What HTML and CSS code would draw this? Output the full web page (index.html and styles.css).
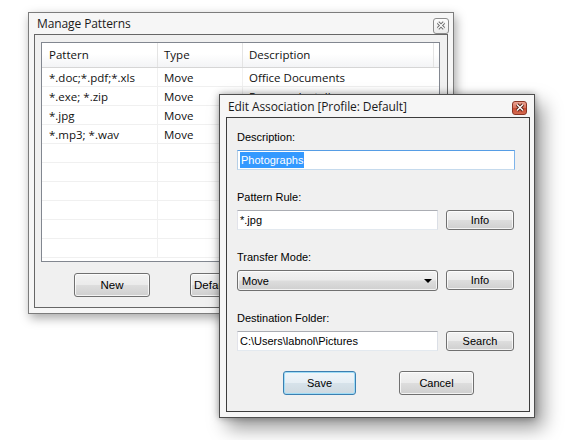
FILE: index.html
```html
<!DOCTYPE html>
<html>
<head>
<meta charset="utf-8">
<link rel="stylesheet" href="styles.css">
</head>
<body>
<div class="desk">
  <div class="win win-manage">
    <div class="titlebar">
      <span class="title">Manage Patterns</span>
      <span class="close close-inactive">
        <svg width="10" height="9" viewBox="0 0 10 9"><path d="M2 1.5 L8 7.5 M8 1.5 L2 7.5" stroke="#707070" stroke-width="3.2" fill="none"/><path d="M2 1.5 L8 7.5 M8 1.5 L2 7.5" stroke="#fff" stroke-width="1.2" fill="none"/></svg>
      </span>
    </div>
    <div class="client client-manage">
      <div class="list">
        <div class="lrow lhead">
          <div class="c c1">Pattern</div>
          <div class="c c2">Type</div>
          <div class="c c3">Description</div>
          <div class="c c4"></div>
        </div>
        <div class="lrow"><div class="c c1">*.doc;*.pdf;*.xls</div><div class="c c2">Move</div><div class="c c3">Office Documents</div></div>
        <div class="lrow"><div class="c c1">*.exe; *.zip</div><div class="c c2">Move</div><div class="c c3">Program Installers</div></div>
        <div class="lrow"><div class="c c1">*.jpg</div><div class="c c2">Move</div><div class="c c3"></div></div>
        <div class="lrow"><div class="c c1">*.mp3; *.wav</div><div class="c c2">Move</div><div class="c c3"></div></div>
        <div class="lrow"><div class="c c1"></div><div class="c c2"></div><div class="c c3"></div></div>
        <div class="lrow"><div class="c c1"></div><div class="c c2"></div><div class="c c3"></div></div>
        <div class="lrow"><div class="c c1"></div><div class="c c2"></div><div class="c c3"></div></div>
        <div class="lrow"><div class="c c1"></div><div class="c c2"></div><div class="c c3"></div></div>
        <div class="lrow"><div class="c c1"></div><div class="c c2"></div><div class="c c3"></div></div>
        <div class="lrow"><div class="c c1"></div><div class="c c2"></div><div class="c c3"></div></div>
      </div>
      <div class="btnrow-manage">
        <div class="btn btn-m">New</div>
        <div class="btn btn-m btn-left">Default</div>
      </div>
    </div>
  </div>

  <div class="win win-edit">
    <div class="titlebar titlebar-edit">
      <span class="title">Edit Association [Profile: Default]</span>
      <span class="close close-active">
        <svg width="10" height="9" viewBox="0 0 10 9"><path d="M2 1.5 L8 7.5 M8 1.5 L2 7.5" stroke="#5a2418" stroke-width="3.4" fill="none"/><path d="M2 1.5 L8 7.5 M8 1.5 L2 7.5" stroke="#fff" stroke-width="1.4" fill="none"/></svg>
      </span>
    </div>
    <div class="client client-edit">
      <div class="group">
        <div class="label">Description:</div>
        <div class="field field-focus"><span class="sel">Photographs</span></div>
      </div>
      <div class="group">
        <div class="label">Pattern Rule:</div>
        <div class="pair">
          <div class="field">*.jpg</div>
          <div class="btn btn-s">Info</div>
        </div>
      </div>
      <div class="group">
        <div class="label">Transfer Mode:</div>
        <div class="pair">
          <div class="combo"><span>Move</span><span class="arrow"></span></div>
          <div class="btn btn-s">Info</div>
        </div>
      </div>
      <div class="group">
        <div class="label">Destination Folder:</div>
        <div class="pair">
          <div class="field">C:\Users\labnol\Pictures</div>
          <div class="btn btn-s">Search</div>
        </div>
      </div>
      <div class="btnrow-edit">
        <div class="btn btn-l btn-default">Save</div>
        <div class="btn btn-l btn-cancel">Cancel</div>
      </div>
    </div>
  </div>
</div>
</body>
</html>
```

FILE: styles.css
```css
* { box-sizing: border-box; }
html, body { margin: 0; padding: 0; background: #fff; }
.desk { position: relative; width: 575px; height: 440px; overflow: hidden; }

.win {
  position: absolute;
  display: flex;
  flex-direction: column;
  background: #f6f6f6;
}
.win-manage {
  left: 28px; top: 12px; width: 426px; height: 302px;
  border: 1px solid #7c7c7c;
  padding: 0 5px 5px 5px;
  box-shadow: 2px 4px 10px rgba(0,0,0,0.35);
}
.win-edit {
  left: 219px; top: 94px; width: 316px; height: 324px;
  border: 1px solid #4e4e4e;
  padding: 0 4px 5px 6px;
  box-shadow: 0 0 7px rgba(0,0,0,0.35), 8px 10px 18px rgba(0,0,0,0.4);
}

.titlebar {
  height: 21px;
  display: flex;
  align-items: center;
  justify-content: space-between;
  padding-left: 3px;
}
.titlebar-edit { height: 22px; padding-left: 2px; }
.title {
  font-family: "Open Sans", "Noto Sans", sans-serif;
  font-size: 12px;
  color: #1a1a1a;
  letter-spacing: -0.1px;
}
.close {
  display: flex;
  align-items: center;
  justify-content: center;
  border-radius: 3px;
}
.close-inactive {
  width: 16px; height: 16px;
  margin-right: -1px; margin-top: 4px;
  border: 1px solid #8c8c8c;
  background: linear-gradient(#fdfdfd, #ececec);
}
.close-active {
  width: 15px; height: 14px;
  margin-right: 3px; margin-top: 3px;
  border: 1px solid #8a3524;
  background: linear-gradient(#eba494, #d8705a 50%, #c84b33 51%, #d56a50);
}

.client {
  flex: 1;
  background: #f0f0f0;
  display: flex;
  flex-direction: column;
}
.client-manage {
  border: 1px solid #666;
  padding: 7px 7px 0 6px;
}
.client-edit {
  border: 1px solid #3c3c3c;
  padding: 12px 14px 0 10px;
  font-family: "Liberation Sans", Arial, sans-serif;
  font-size: 11px;
  color: #000;
}

/* list view */
.list {
  height: 220px;
  border: 1px solid #828790;
  background: #fff;
  font-family: "Open Sans", "Noto Sans", sans-serif;
  font-size: 11.5px;
  color: #111;
  display: flex;
  flex-direction: column;
}
.lrow {
  display: grid;
  grid-template-columns: 116px 85px 1fr;
  height: 19px;
  border-bottom: 1px solid #f0f0f0;
}
.lrow .c {
  display: flex;
  align-items: center;
  white-space: nowrap;
  overflow: hidden;
  padding-left: 6px;
  border-right: 1px solid #f0f0f0;
}
.lrow .c1 { padding-left: 7px; }
.lrow .c3 { border-right: none; }
.lhead {
  grid-template-columns: 116px 85px 191px 1fr;
  height: 25px;
  background: linear-gradient(#ffffff, #ffffff 45%, #f3f4f6);
  border-bottom: 1px solid #d6d6d6;
}
.lhead .c { border-right: 1px solid #e4e4e4; padding-bottom: 1px; }
.lhead .c3 { border-right: 1px solid #e4e4e4; }
.lhead .c4 { border-right: none; }

.btnrow-manage {
  display: flex;
  gap: 40px;
  margin-top: 11px;
  padding-left: 33px;
}

/* buttons */
.btn {
  display: flex;
  align-items: center;
  justify-content: center;
  border: 1px solid #707070;
  border-radius: 3px;
  background: linear-gradient(#f3f3f3, #ebebeb 48%, #dddddd 52%, #cfcfcf);
  font-family: "Liberation Sans", Arial, sans-serif;
  font-size: 11px;
  color: #000;
  box-shadow: inset 0 0 0 1px rgba(255,255,255,0.75);
}
.btn-m { width: 76px; height: 24px; font-size: 11.5px; }
.btn-left { justify-content: flex-start; padding-left: 3px; }
.btn-s { width: 68px; height: 20px; }
.btn-l { height: 24px; }
.btn-default {
  width: 73px;
  border-color: #3c7fb1;
  box-shadow: inset 0 0 0 1px #9fdcf6;
  background: linear-gradient(#f0f6fa, #e6eef4 48%, #d6e2ea 52%, #cfd9e0);
}
.btn-cancel { width: 75px; }

/* edit dialog */
.group {
  display: flex;
  flex-direction: column;
  margin-bottom: 20px;
}
.label {
  height: 14px;
  line-height: 14px;
  margin-bottom: 6px;
}
.field {
  height: 20px;
  background: #fff;
  border: 1px solid;
  border-color: #abadb3 #dbdfe6 #e3e9ef #e2e3ea;
  display: flex;
  align-items: center;
  padding-left: 2px;
  white-space: nowrap;
}
.field-focus {
  width: 278px;
  border-color: #569de5 #7eb4ea #c5daed #b5cfe7;
}
.sel {
  background: #3399ff;
  color: #fff;
  padding: 1px 1px;
  line-height: 14px;
}
.pair {
  display: grid;
  grid-template-columns: 201px 68px;
  gap: 8px;
}
.combo {
  height: 21px;
  border: 1px solid #707070;
  border-radius: 3px;
  background: linear-gradient(#f3f3f3, #ebebeb 48%, #dddddd 52%, #cfcfcf);
  box-shadow: inset 0 0 0 1px rgba(255,255,255,0.75);
  display: flex;
  align-items: center;
  justify-content: space-between;
  padding: 0 5px 0 4px;
}
.arrow {
  width: 0; height: 0;
  border-left: 4px solid transparent;
  border-right: 4px solid transparent;
  border-top: 4px solid #000;
}
.btnrow-edit {
  display: flex;
  gap: 43px;
  padding-left: 46px;
}
```
